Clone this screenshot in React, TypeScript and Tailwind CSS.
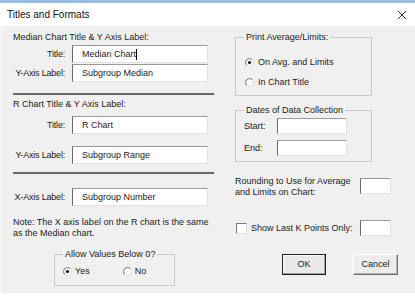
import React from 'react';

const font = "font-['Liberation_Sans',Arial,sans-serif]";

const Radio: React.FC<{ checked?: boolean }> = ({ checked }) => (
  <svg width="9" height="9" viewBox="0 0 9 9" className="shrink-0">
    <circle cx="4.5" cy="4.5" r="4" fill="#fbfbfb" />
    <path d="M1.67 7.33 A4 4 0 0 1 7.33 1.67" stroke="#6b6b6b" fill="none" strokeWidth="1" />
    <path d="M7.33 1.67 A4 4 0 0 1 1.67 7.33" stroke="#dcdcdc" fill="none" strokeWidth="1" />
    {checked && <circle cx="4.5" cy="4.5" r="1.6" fill="#111" />}
  </svg>
);

const Box: React.FC<{ className?: string; children?: React.ReactNode }> = ({ className = '', children }) => (
  <div
    className={`bg-white border border-t-[#9a9a9a] border-l-[#6a6a6a] border-r-[#e2e2e2] border-b-[#e2e2e2] flex items-center ${className}`}
  >
    {children}
  </div>
);

const LabeledField: React.FC<{ label: string; value: string; caret?: boolean; className?: string }> = ({
  label,
  value,
  caret,
  className = '',
}) => (
  <div className={`flex items-center ${className}`}>
    <span className="w-[52px] shrink-0 flex justify-end whitespace-nowrap tracking-[-0.2px]">{label}</span>
    <Box className="ml-[7px] w-[136px] h-[18px] pl-[9px]">
      <span>{value}</span>
      {caret && <span className="w-px h-[11px] bg-black" />}
    </Box>
  </div>
);

const Separator: React.FC<{ className?: string }> = ({ className = '' }) => (
  <div className={`w-[201px] h-[2px] bg-[#686868] ${className}`} />
);

export default function App() {
  return (
    <div className={`w-[415px] h-[298px] flex flex-col bg-white text-[9px] leading-[11px] text-[#1b1b1b] ${font}`}>
      {/* title bar */}
      <div className="h-[3px] bg-[#98bde0]" />
      <div className="h-[23px] flex items-center justify-between pl-[7px] pr-[8px] bg-white">
        <span className="text-[10px] text-[#111]">Titles and Formats</span>
        <svg width="10" height="10" viewBox="0 0 10 10">
          <path d="M1 1 L9 9 M9 1 L1 9" stroke="#333" strokeWidth="1" />
        </svg>
      </div>

      {/* body */}
      <div className="h-[267px] bg-[#f0f0f0] border-l border-[#f8f8f8] flex pl-[12px]">
        {/* left column */}
        <div className="w-[202px] flex flex-col">
          <div className="mt-[6px]">Median Chart Title &amp; Y Axis Label:</div>
          <LabeledField className="mt-[2px]" label="Title:" value="Median Chart" caret />
          <LabeledField className="mt-[1px]" label="Y-Axis Label:" value="Subgroup Median" />
          <Separator className="mt-[11px]" />

          <div className="mt-[4px]">R Chart Title &amp; Y Axis Label:</div>
          <LabeledField className="mt-[6px]" label="Title:" value="R Chart" />
          <LabeledField className="mt-[12px]" label="Y-Axis Label:" value="Subgroup Range" />
          <Separator className="mt-[8px]" />

          <LabeledField className="mt-[14px]" label="X-Axis Label:" value="Subgroup Number" />
          <p className="mt-[11px] w-[204px]">
            Note: The X axis label on the R chart is the same as the Median chart.
          </p>

          <fieldset className="mt-[10px] ml-[41px] w-[121px] border border-[#cacaca] px-[8px] pt-[5px] pb-[8px]">
            <legend className="px-[2px]">Allow Values Below 0?</legend>
            <div className="flex items-center h-[12px]">
              <Radio checked />
              <span className="ml-[3px]">Yes</span>
              <span className="ml-[33px]">
                <Radio />
              </span>
              <span className="ml-[3px]">No</span>
            </div>
          </fieldset>
        </div>

        {/* right column */}
        <div className="ml-[20px] w-[163px] flex flex-col">
          <fieldset className="mt-[6px] w-[137px] border border-[#cacaca] px-[8px] pt-[13px] pb-[7px]">
            <legend className="px-[2px]">Print Average/Limits:</legend>
            <div className="flex items-center h-[12px] pl-[1px]">
              <Radio checked />
              <span className="ml-[4px]">On Avg. and Limits</span>
            </div>
            <div className="flex items-center h-[12px] pl-[1px] mt-[8px]">
              <Radio />
              <span className="ml-[4px]">In Chart Title</span>
            </div>
          </fieldset>

          <fieldset className="mt-[9px] w-[137px] border border-[#cacaca] px-[8px] pt-[2px] pb-[5px]">
            <legend className="px-[2px]">Dates of Data Collection</legend>
            <div className="flex items-center">
              <span className="w-[33px]">Start:</span>
              <Box className="w-[70px] h-[16px]" />
            </div>
            <div className="flex items-center mt-[6px]">
              <span className="w-[33px]">End:</span>
              <Box className="w-[70px] h-[16px]" />
            </div>
          </fieldset>

          <div className="mt-[14px] flex items-start justify-between pr-[7px]">
            <span>
              Rounding to Use for Average
              <br />
              and Limits on Chart:
            </span>
            <Box className="mt-[2px] w-[31px] h-[16px]" />
          </div>

          <div className="mt-[22px] flex items-center justify-between pr-[7px]">
            <div className="flex items-center">
              <span className="ml-[1px] w-[11px] h-[11px] bg-white border border-t-[#7a7a7a] border-l-[#7a7a7a] border-r-[#dedede] border-b-[#dedede]" />
              <span className="ml-[4px]">Show Last K Points Only:</span>
            </div>
            <Box className="w-[31px] h-[16px]" />
          </div>

          <div className="mt-[18px] flex">
            <button className="ml-[47px] w-[44px] h-[21px] border border-[#1f1f1f] bg-[#e9e9e9] shadow-[inset_-1px_-1px_0_#a0a0a0,inset_1px_1px_0_#ffffff] text-[9px]">
              OK
            </button>
            <button className="ml-[27px] w-[45px] h-[21px] border border-t-[#ffffff] border-l-[#ffffff] border-r-[#6e6e6e] border-b-[#6e6e6e] bg-[#ececec] shadow-[inset_-1px_-1px_0_#b4b4b4] text-[9px]">
              Cancel
            </button>
          </div>
        </div>
      </div>
      <div className="flex-1 bg-white" />
    </div>
  );
}
